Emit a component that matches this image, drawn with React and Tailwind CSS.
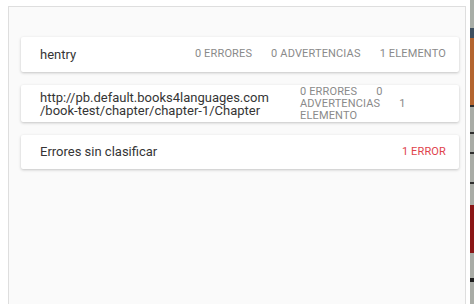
import React from "react";

function Label({ children, className = "" }) {
  return <span className={"ml-[19px] first:ml-0 " + className}>{children}</span>;
}

export default function App() {
  const strip = [
    ["h-[28px]", "bg-[#a8aea7]"],
    ["h-[10px]", "bg-[#3e4f5f]"],
    ["h-[67px]", "bg-[#b4642e]"],
    ["h-[2px]", "bg-[#2e2e2e]"],
    ["h-[25px]", "bg-[#a9aca6]"],
    ["h-[2px]", "bg-[#2e2e2e]"],
    ["h-[18px]", "bg-[#a9aca6]"],
    ["h-[2px]", "bg-[#2e2e2e]"],
    ["h-[28px]", "bg-[#a9aca6]"],
    ["h-[2px]", "bg-[#2e2e2e]"],
    ["h-[21px]", "bg-[#a9aca6]"],
    ["h-[48px]", "bg-[#8a1616]"],
    ["h-[25px]", "bg-[#a9aca6]"],
    ["h-[4px]", "bg-[#1e1e1e]"],
    ["h-[22px]", "bg-[#a9aca6]"],
  ];
  return (
    <div
      className="flex w-[474px] h-[304px] overflow-hidden bg-white"
      style={{ fontFamily: "Roboto, 'Liberation Sans', sans-serif" }}
    >
      <div className="w-[8px] shrink-0 bg-white" />
      <div className="flex flex-col w-[458px] shrink-0">
        <div className="h-[6px] bg-white" />
        <div className="flex-1 bg-[#fafafa] border-l border-t border-r border-[#dedede] pl-[12px] pr-[6px] pt-[30px] flex flex-col gap-[13px]">
          <div className="h-[35px] bg-white rounded-[2px] shadow-[0_1px_3px_rgba(0,0,0,0.22)] flex items-center pl-[19px] pr-[13px]">
            <span className="text-[13px] text-[#353535]">hentry</span>
            <div className="ml-auto flex text-[11px] text-[#8a8a8a] tracking-[0.15px]">
              <Label>0 ERRORES</Label>
              <Label>0 ADVERTENCIAS</Label>
              <Label>1 ELEMENTO</Label>
            </div>
          </div>
          <div className="h-[37px] bg-white rounded-[2px] shadow-[0_1px_3px_rgba(0,0,0,0.22)] flex items-center pl-[19px] pr-[13px]">
            <div className="text-[13px] text-[#353535] leading-[13px]">
              <div>http://pb.default.books4languages.com</div>
              <div>/book-test/chapter/chapter-1/Chapter</div>
            </div>
            <div className="ml-auto w-[146px] text-[11px] text-[#8a8a8a] leading-[12px] tracking-[0.15px]">
              <span>0 ERRORES</span>
              <span className="ml-[19px]">0 ADVERTENCIAS</span>
              <span className="ml-[19px]">1 ELEMENTO</span>
            </div>
          </div>
          <div className="h-[34px] bg-white rounded-[2px] shadow-[0_1px_3px_rgba(0,0,0,0.22)] flex items-center pl-[19px] pr-[13px]">
            <span className="text-[13px] text-[#353535]">Errores sin clasificar</span>
            <span className="ml-auto text-[11px] text-[#e0424b] tracking-[0.15px]">1 ERROR</span>
          </div>
        </div>
      </div>
      <div className="w-[4px] shrink-0 bg-white" />
      <div className="w-[4px] shrink-0 flex flex-col">
        {strip.map(([h, c], i) => (
          <div key={i} className={h + " " + c} />
        ))}
      </div>
    </div>
  );
}
